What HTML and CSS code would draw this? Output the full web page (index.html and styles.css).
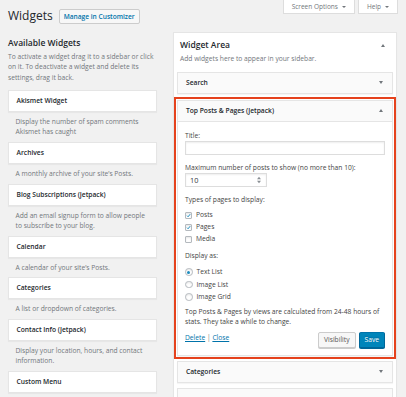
FILE: index.html
```html
<!DOCTYPE html>
<html lang="en">
<head>
  <meta charset="UTF-8" />
  <title>Widgets</title>
  <link rel="stylesheet" href="styles.css">
</head>
<body>
  <div class="top-bar">
    <div class="title-row">
      <h1>Widgets</h1>
      <a class="manage-btn">Manage in Customizer</a>
    </div>
    <div class="screen-links">
      <span class="screen-tab">Screen Options <i class="caret"></i></span>
      <span class="screen-tab">Help <i class="caret"></i></span>
    </div>
  </div>

  <div class="columns">
    <div class="available">
      <h2>Available Widgets</h2>
      <p class="intro">To activate a widget drag it to a sidebar or click on it. To deactivate a widget and delete its settings, drag it back.</p>

      <div class="avail-list">
        <div class="avail-top">Akismet Widget</div>
        <div class="avail-desc">Display the number of spam comments Akismet has caught</div>
        <div class="avail-top">Archives</div>
        <div class="avail-desc">A monthly archive of your site’s Posts.</div>
        <div class="avail-top">Blog Subscriptions (Jetpack)</div>
        <div class="avail-desc">Add an email signup form to allow people to subscribe to your blog.</div>
        <div class="avail-top">Calendar</div>
        <div class="avail-desc">A calendar of your site’s Posts.</div>
        <div class="avail-top">Categories</div>
        <div class="avail-desc">A list or dropdown of categories.</div>
        <div class="avail-top">Contact Info (Jetpack)</div>
        <div class="avail-desc">Display your location, hours, and contact information.</div>
        <div class="avail-top">Custom Menu</div>
      </div>
    </div>

    <div class="sidebar-box">
      <div class="sidebar-head">
        <h2>Widget Area</h2>
        <i class="tri-up"></i>
      </div>
      <p class="sidebar-desc">Add widgets here to appear in your sidebar.</p>

      <div class="widget">
        <div class="widget-top"><span>Search</span><i class="tri-down"></i></div>
      </div>

      <div class="highlight">
        <div class="widget open">
          <div class="widget-top"><span>Top Posts &amp; Pages (Jetpack)</span><i class="tri-up"></i></div>
          <div class="widget-inside">
            <div class="field">
              <label>Title:</label>
              <div class="text-input"></div>
            </div>
            <div class="field">
              <label>Maximum number of posts to show (no more than 10):</label>
              <div class="number-input">
                <span>10</span>
                <svg width="6" height="8" viewBox="0 0 6 8"><path d="M3 0.8 L5 3.2 L1 3.2 Z M3 7.2 L5 4.8 L1 4.8 Z" fill="#8a8f94"/></svg>
              </div>
            </div>

            <div class="group-label">Types of pages to display:</div>
            <div class="options">
              <div class="option"><span class="check"><svg width="7" height="7" viewBox="0 0 10 10"><path d="M2 5.3 L4.2 7.5 L8.3 2.4" fill="none" stroke="#1e8cbe" stroke-width="2"/></svg></span>Posts</div>
              <div class="option"><span class="check"><svg width="7" height="7" viewBox="0 0 10 10"><path d="M2 5.3 L4.2 7.5 L8.3 2.4" fill="none" stroke="#1e8cbe" stroke-width="2"/></svg></span>Pages</div>
              <div class="option"><span class="check"></span>Media</div>
            </div>

            <div class="group-label display-label">Display as:</div>
            <div class="options radios">
              <div class="option"><span class="radio on"></span>Text List</div>
              <div class="option"><span class="radio"></span>Image List</div>
              <div class="option"><span class="radio"></span>Image Grid</div>
            </div>

            <p class="note">Top Posts &amp; Pages by views are calculated from 24-48 hours of stats. They take a while to change.</p>

            <div class="actions">
              <div class="links"><a>Delete</a> <span class="sep">|</span> <a>Close</a></div>
              <div class="buttons">
                <span class="btn">Visibility</span>
                <span class="btn primary">Save</span>
              </div>
            </div>
          </div>
        </div>
      </div>

      <div class="widget">
        <div class="widget-top"><span>Categories</span><i class="tri-down"></i></div>
      </div>
      <div class="widget">
        <div class="widget-top"></div>
      </div>
    </div>
  </div>
</body>
</html>
```

FILE: styles.css
```css
* {
  box-sizing: border-box;
}

body {
  margin: 0;
  padding: 0 8px;
  background: #f1f1f1;
  font-family: 'Open Sans', 'Liberation Sans', sans-serif;
  font-size: 6.7px;
  line-height: 10px;
  color: #444;
}

.top-bar {
  display: flex;
  align-items: flex-start;
}

.title-row {
  display: flex;
  align-items: center;
  gap: 6px;
  margin-top: 8px;
}

.title-row h1 {
  margin: 0;
  font-size: 12px;
  line-height: 16px;
  font-weight: 400;
  color: #23282d;
}

.manage-btn {
  display: block;
  height: 15px;
  padding: 0 4px;
  border: 1px solid #ccc;
  border-radius: 2px;
  background: #f7f7f7;
  color: #0073aa;
  font-weight: 600;
  font-size: 6.6px;
  line-height: 13px;
}

.screen-links {
  margin-left: auto;
  display: flex;
  gap: 3px;
}

.screen-tab {
  display: flex;
  align-items: center;
  gap: 4px;
  height: 14px;
  padding: 0 8px;
  background: #fff;
  border: 1px solid #ddd;
  border-top: 0;
  color: #72777c;
  font-size: 6.5px;
}

.caret {
  border-left: 2px solid transparent;
  border-right: 2px solid transparent;
  border-top: 2.5px solid #72777c;
}

.columns {
  display: grid;
  grid-template-columns: 149px 224px;
  gap: 16px;
  align-items: start;
  margin-top: 8px;
}

.available h2 {
  margin: 4.7px 0 0;
  font-size: 8.5px;
  line-height: 12px;
  font-weight: 600;
  color: #23282d;
}

.intro {
  margin: 3.3px 0 0;
  line-height: 10.5px;
  color: #72777c;
}

.avail-list {
  margin-top: 7px;
}

.avail-top {
  height: 22px;
  padding: 0 7.5px;
  background: #fff;
  border: 1px solid #e5e5e5;
  box-shadow: 0 1px 1px rgba(0, 0, 0, 0.04);
  font-weight: 600;
  line-height: 20px;
  color: #23282d;
}

.avail-desc {
  padding: 5px 7.5px 4.7px;
  color: #72777c;
}

.sidebar-box {
  background: #fff;
  border: 1px solid #e5e5e5;
  box-shadow: 0 1px 1px rgba(0, 0, 0, 0.04);
  padding: 0 3px 5px;
}

.sidebar-head {
  display: flex;
  justify-content: space-between;
  align-items: center;
  padding: 6px 8px 0 3px;
}

.sidebar-head h2 {
  margin: 0;
  font-size: 8.5px;
  line-height: 12px;
  font-weight: 600;
  color: #23282d;
}

.sidebar-desc {
  margin: 3.3px 0 7.7px;
  padding-left: 3px;
  color: #72777c;
}

.tri-up,
.tri-down {
  border-left: 2.5px solid transparent;
  border-right: 2.5px solid transparent;
}

.tri-up {
  border-bottom: 3px solid #72777c;
}

.tri-down {
  border-top: 3px solid #72777c;
}

.widget {
  margin-bottom: 5px;
  background: #fff;
  border: 1px solid #e5e5e5;
  box-shadow: 0 1px 1px rgba(0, 0, 0, 0.04);
}

.widget-top {
  display: flex;
  justify-content: space-between;
  align-items: center;
  height: 20px;
  padding: 0 9px 0 8px;
  background: #fafafa;
  font-weight: 600;
  color: #23282d;
}

.highlight {
  margin: -2px -3px 2px;
  padding: 1px;
  border: 2px solid #e5421d;
}

.highlight .widget {
  margin: 0;
}

.open .widget-top {
  height: 21px;
  border-bottom: 1px solid #e5e5e5;
}

.widget-inside {
  padding: 9px 7px 7px;
}

.field {
  margin-bottom: 8px;
}

.field label {
  display: block;
}

.text-input {
  height: 14px;
  border: 1px solid #ddd;
  box-shadow: inset 0 1px 2px rgba(0, 0, 0, 0.07);
}

.number-input {
  display: flex;
  justify-content: space-between;
  align-items: center;
  width: 82px;
  height: 14px;
  padding: 0 4px 0 4px;
  border: 1px solid #ddd;
  box-shadow: inset 0 1px 2px rgba(0, 0, 0, 0.07);
  font-size: 7.3px;
  color: #32373c;
}

.field + .group-label {
  margin-top: 8.5px;
}

.options {
  margin-top: 4px;
}

.option {
  display: flex;
  align-items: center;
  gap: 4px;
  height: 12px;
}

.radios .option {
  height: 12.5px;
}

.check {
  display: flex;
  align-items: center;
  justify-content: center;
  width: 7px;
  height: 7px;
  border: 1px solid #b4b9be;
  border-radius: 1px;
  background: #fff;
  box-shadow: inset 0 1px 2px rgba(0, 0, 0, 0.1);
}

.radio {
  position: relative;
  width: 7.5px;
  height: 7.5px;
  border: 1px solid #b4b9be;
  border-radius: 50%;
  background: #fff;
  box-shadow: inset 0 1px 2px rgba(0, 0, 0, 0.1);
}

.radio.on::after {
  content: '';
  position: absolute;
  left: 1.25px;
  top: 1.25px;
  width: 3px;
  height: 3px;
  border-radius: 50%;
  background: #1e8cbe;
}

.display-label {
  margin-top: 6px;
}

.radios {
  margin-top: 4.5px;
}

.note {
  margin: 4px 0 0;
}

.actions {
  display: flex;
  justify-content: space-between;
  align-items: flex-start;
  margin-top: 5px;
}

.links {
  margin-top: 0.5px;
}

.links a {
  color: #0073aa;
  text-decoration: underline;
}

.sep {
  color: #72777c;
}

.buttons {
  display: flex;
  gap: 3px;
}

.btn {
  display: block;
  height: 15.5px;
  padding: 0 5px;
  border: 1px solid #ccc;
  border-radius: 2px;
  background: #f7f7f7;
  box-shadow: 0 1px 0 #ccc;
  color: #555;
  line-height: 13.5px;
}

.btn.primary {
  background: #0085ba;
  border-color: #0073aa #006799 #006799;
  box-shadow: 0 1px 0 #006799;
  color: #fff;
  text-shadow: 0 -1px 1px #006799;
}
```
